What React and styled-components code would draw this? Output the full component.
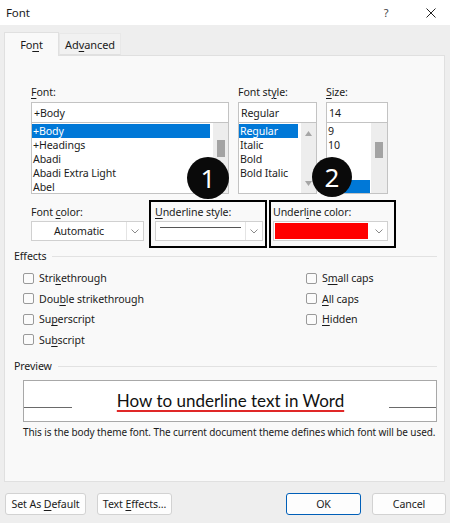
import React from 'react';
import styled, { createGlobalStyle } from 'styled-components';

const Global = createGlobalStyle`
  html, body { margin: 0; padding: 0; background: #eeeeee; }
  body { font-family: "Noto Sans", "Open Sans", sans-serif; color: #1b1b1b; }
  #root { width: 450px; height: 523px; }
  * { box-sizing: border-box; }
`;

const Window = styled.div`
  position: relative;
  width: 450px;
  height: 523px;
  background: #eeeeee;
  display: flex;
  flex-direction: column;
  overflow: hidden;
  font-size: 10.6px;
  letter-spacing: -0.1px;
`;

const TitleBar = styled.div`
  height: 25px;
  flex: none;
  background: #ffffff;
  display: flex;
  align-items: center;
  padding: 0 3px 0 6px;
  font-size: 11.5px;
`;
const Title = styled.div`flex: 1;`;
const TitleBtn = styled.div`
  width: ${p => p.$w}px;
  margin-left: ${p => p.$ml || 0}px;
  display: flex;
  justify-content: center;
  align-items: center;
  color: #444;
  font-size: 11px;
`;

const TabRow = styled.div`
  height: 30px;
  flex: none;
  display: flex;
  align-items: flex-end;
  padding-left: 4px;
`;
const Tab = styled.div`
  position: relative;
  z-index: ${p => (p.$active ? 2 : 1)};
  width: ${p => p.$w}px;
  height: ${p => (p.$active ? 24 : 22)}px;
  margin-bottom: ${p => (p.$active ? -1 : 0)}px;
  background: ${p => (p.$active ? '#f9f9f9' : '#f1f1f1')};
  border: 1px solid ${p => (p.$active ? '#e0e0e0' : '#e8e8e8')};
  border-bottom: ${p => (p.$active ? 'none' : '1px solid #e0e0e0')};
  display: flex;
  align-items: center;
  justify-content: center;
  font-size: 11px;
  padding-bottom: ${p => (p.$active ? 1 : 0)}px;
`;

const Panel = styled.div`
  position: relative;
  z-index: 1;
  margin-left: 4px;
  width: 441px;
  height: 427px;
  flex: none;
  background: #f9f9f9;
  border: 1px solid #e0e0e0;
  display: flex;
  flex-direction: column;
`;

const Key = styled.span`
  text-decoration: underline;
  text-underline-offset: 2px;
  text-decoration-thickness: 1px;
`;

const FontRow = styled.div`
  display: flex;
  gap: 9px;
  padding: 29px 0 0 26px;
`;
const Column = styled.div`
  width: ${p => p.$w}px;
  display: flex;
  flex-direction: column;
`;
const Label = styled.div`
  height: 14px;
  line-height: 14px;
  margin-bottom: ${p => (p.$mb != null ? p.$mb : 3)}px;
  white-space: nowrap;
`;
const TextBox = styled.div`
  height: 21px;
  background: #fff;
  border: 1px solid #c3c3c3;
  padding-left: 2px;
  display: flex;
  align-items: center;
`;
const ListBox = styled.div`
  height: 71px;
  background: #fff;
  border: 1px solid #c3c3c3;
  border-top: none;
  display: flex;
  overflow: hidden;
`;
const Items = styled.div`
  flex: 1;
  padding-top: 1px;
  margin-right: ${p => p.$gap}px;
  display: flex;
  flex-direction: column;
`;
const Item = styled.div`
  height: 14px;
  line-height: 14px;
  flex: none;
  padding-left: 1px;
  white-space: nowrap;
  background: ${p => (p.$sel ? '#0078d7' : 'transparent')};
  color: ${p => (p.$sel ? '#ffffff' : 'inherit')};
`;
const Track = styled.div`
  width: ${p => p.$w}px;
  flex: none;
  background: #ededed;
  display: flex;
  flex-direction: column;
  align-items: center;
  justify-content: ${p => (p.$arrows ? 'space-between' : 'flex-start')};
  padding: ${p => (p.$arrows ? '8px 0 7px' : `${p.$top}px 0 0`)};
`;
const Thumb = styled.div`
  width: 8px;
  height: ${p => p.$h}px;
  background: #a3a3a3;
`;

const ComboRow = styled.div`
  display: flex;
  gap: 2px;
  margin: 6px 0 0 24px;
`;
const Group = styled.div`
  width: ${p => p.$w}px;
  height: 48px;
  border: 2px solid ${p => (p.$marked ? '#000000' : 'transparent')};
  padding: 3px 0 0 ${p => p.$pl}px;
  display: flex;
  flex-direction: column;
`;
const Combo = styled.div`
  width: ${p => p.$w}px;
  height: 20px;
  background: #ffffff;
  border: 1px solid #d0d0d0;
  display: flex;
  align-items: stretch;
  margin-top: -1px;
`;
const ComboValue = styled.div`
  flex: 1;
  display: flex;
  align-items: center;
  justify-content: center;
`;
const ComboLine = styled.div`
  flex: 1;
  margin: 5px 4px 0 4px;
  height: 1px;
  background: #555;
`;
const ColorFill = styled.div`
  flex: 1;
  margin: 1px;
  background: #ff0000;
`;
const ChevronCell = styled.div`
  width: ${p => p.$w}px;
  flex: none;
  display: flex;
  align-items: center;
  justify-content: center;
  border-left: 1px solid ${p => (p.$divider ? '#e4e4e4' : 'transparent')};
`;

const SectionHead = styled.div`
  display: flex;
  align-items: center;
  gap: 6px;
  margin: ${p => p.$mt}px 7px 0 9px;
  height: 14px;
  &::after {
    content: "";
    flex: 1;
    height: 1px;
    background: #e2e2e2;
  }
`;

const Effects = styled.div`
  display: grid;
  grid-template-columns: 283px 1fr;
  grid-auto-flow: column;
  grid-template-rows: repeat(4, 20.5px);
  margin: 5px 0 0 18px;
`;
const CheckRow = styled.label`
  display: flex;
  align-items: center;
  gap: 5px;
  white-space: nowrap;
`;
const Box = styled.span`
  width: 11px;
  height: 11px;
  border: 1px solid #9a9a9a;
  border-radius: 2px;
  background: #fbfbfb;
  flex: none;
`;

const PreviewBox = styled.div`
  margin: 7px 7px 0 18px;
  height: 42px;
  background: #ffffff;
  border: 1px solid #a8a8a8;
  display: flex;
  align-items: flex-start;
`;
const PreviewRule = styled.div`
  width: ${p => p.$w}px;
  height: 27px;
  border-bottom: 1px solid #6a6a6a;
  flex: none;
`;
const PreviewText = styled.div`
  flex: 1;
  text-align: center;
  font-family: Lato, "Noto Sans", sans-serif;
  font-size: 17px;
  letter-spacing: 0;
  line-height: 20px;
  padding-top: 10px;
  color: #111;
  & span {
    text-decoration: underline;
    text-decoration-color: #e02828;
    text-decoration-thickness: 1.5px;
    text-underline-offset: 3px;
  }
`;
const Note = styled.div`
  margin: 3px 0 0 18px;
  height: 14px;
  line-height: 14px;
  font-size: 10px;
  white-space: nowrap;
`;

const Footer = styled.div`
  display: flex;
  justify-content: space-between;
  padding: 11px 4px 0 5px;
`;
const ButtonGroup = styled.div`
  display: flex;
  gap: 11px;
`;
const Button = styled.div`
  width: ${p => p.$w}px;
  height: 22px;
  border: 1px solid ${p => (p.$primary ? '#005fb8' : '#d2d2d2')};
  border-radius: 3px;
  background: #fdfdfd;
  display: flex;
  align-items: center;
  justify-content: center;
  white-space: nowrap;
`;

const Badge = styled.div`
  position: absolute;
  left: ${p => p.$x}px;
  top: ${p => p.$y}px;
  width: ${p => p.$d}px;
  height: ${p => p.$d}px;
  border-radius: 50%;
  background: #0a0a0a;
  color: #fff;
  display: flex;
  align-items: center;
  justify-content: center;
  font-size: 26px;
  z-index: 5;
  line-height: 1;
`;

const Chevron = () => (
  <svg width="8" height="5" viewBox="0 0 8 5">
    <polyline points="0.5,0.5 4,4 7.5,0.5" fill="none" stroke="#8a8a8a" strokeWidth="1" />
  </svg>
);
const Arrow = ({ up }) => (
  <svg width="7" height="5" viewBox="0 0 7 5">
    <polygon points={up ? '0,5 3.5,0 7,5' : '0,0 3.5,5 7,0'} fill="#a6a6a6" />
  </svg>
);
const CloseIcon = () => (
  <svg width="10" height="10" viewBox="0 0 10 10">
    <path d="M0.5 0.5 L9.5 9.5 M9.5 0.5 L0.5 9.5" stroke="#222" strokeWidth="1" />
  </svg>
);

export default function App() {
  return (
    <>
      <Global />
      <Window>
        <TitleBar>
          <Title>Font</Title>
          <TitleBtn $w={40}>?</TitleBtn>
          <TitleBtn $w={32} $ml={9}><CloseIcon /></TitleBtn>
        </TitleBar>
        <TabRow>
          <Tab $active $w={55}><span>Fo<Key>n</Key>t</span></Tab>
          <Tab $w={62}><span>Ad<Key>v</Key>anced</span></Tab>
        </TabRow>
        <Panel>
          <FontRow>
            <Column $w={198}>
              <Label><Key>F</Key>ont:</Label>
              <TextBox>+Body</TextBox>
              <ListBox>
                <Items $gap={3}>
                  <Item $sel>+Body</Item>
                  <Item>+Headings</Item>
                  <Item>Abadi</Item>
                  <Item>Abadi Extra Light</Item>
                  <Item>Abel</Item>
                </Items>
                <Track $w={15} $top={17}><Thumb $h={17} /></Track>
              </ListBox>
            </Column>
            <Column $w={79}>
              <Label>Font st<Key>y</Key>le:</Label>
              <TextBox>Regular</TextBox>
              <ListBox>
                <Items $gap={3}>
                  <Item $sel>Regular</Item>
                  <Item>Italic</Item>
                  <Item>Bold</Item>
                  <Item>Bold Italic</Item>
                </Items>
                <Track $w={15} $arrows><Arrow up /><Arrow /></Track>
              </ListBox>
            </Column>
            <Column $w={62}>
              <Label><Key>S</Key>ize:</Label>
              <TextBox>14</TextBox>
              <ListBox>
                <Items $gap={1}>
                  <Item>9</Item>
                  <Item>10</Item>
                  <Item />
                  <Item />
                  <Item $sel />
                </Items>
                <Track $w={16} $top={19}><Thumb $h={16} /></Track>
              </ListBox>
            </Column>
          </FontRow>

          <ComboRow>
            <Group $w={118} $pl={0}>
              <Label $mb={3}>Font <Key>c</Key>olor:</Label>
              <Combo $w={113}>
                <ComboValue>Automatic</ComboValue>
                <ChevronCell $w={17} $divider><Chevron /></ChevronCell>
              </Combo>
            </Group>
            <Group $w={118} $pl={4} $marked>
              <Label $mb={3}><Key>U</Key>nderline style:</Label>
              <Combo $w={108}>
                <ComboLine />
                <ChevronCell $w={17} $divider><Chevron /></ChevronCell>
              </Combo>
            </Group>
            <Group $w={127} $pl={2} $marked>
              <Label $mb={3}>Underl<Key>i</Key>ne color:</Label>
              <Combo $w={115}>
                <ColorFill />
                <ChevronCell $w={18}><Chevron /></ChevronCell>
              </Combo>
            </Group>
          </ComboRow>

          <SectionHead $mt={1}>Effects</SectionHead>
          <Effects>
            <CheckRow><Box /><span>Stri<Key>k</Key>ethrough</span></CheckRow>
            <CheckRow><Box /><span>Dou<Key>b</Key>le strikethrough</span></CheckRow>
            <CheckRow><Box /><span>Su<Key>p</Key>erscript</span></CheckRow>
            <CheckRow><Box /><span>Su<Key>b</Key>script</span></CheckRow>
            <CheckRow><Box /><span>S<Key>m</Key>all caps</span></CheckRow>
            <CheckRow><Box /><span><Key>A</Key>ll caps</span></CheckRow>
            <CheckRow><Box /><span><Key>H</Key>idden</span></CheckRow>
          </Effects>

          <SectionHead $mt={9}>Preview</SectionHead>
          <PreviewBox>
            <PreviewRule $w={48} />
            <PreviewText><span>How to underline text in Word</span></PreviewText>
            <PreviewRule $w={47} />
          </PreviewBox>
          <Note>This is the body theme font. The current document theme defines which font will be used.</Note>
        </Panel>
        <Footer>
          <ButtonGroup>
            <Button $w={81}><span>Set As <Key>D</Key>efault</span></Button>
            <Button $w={75}><span>Text <Key>E</Key>ffects...</span></Button>
          </ButtonGroup>
          <ButtonGroup>
            <Button $w={75} $primary>OK</Button>
            <Button $w={74}>Cancel</Button>
          </ButtonGroup>
        </Footer>
        <Badge $x={187} $y={157} $d={42}>1</Badge>
        <Badge $x={312} $y={157} $d={40}>2</Badge>
      </Window>
    </>
  );
}
